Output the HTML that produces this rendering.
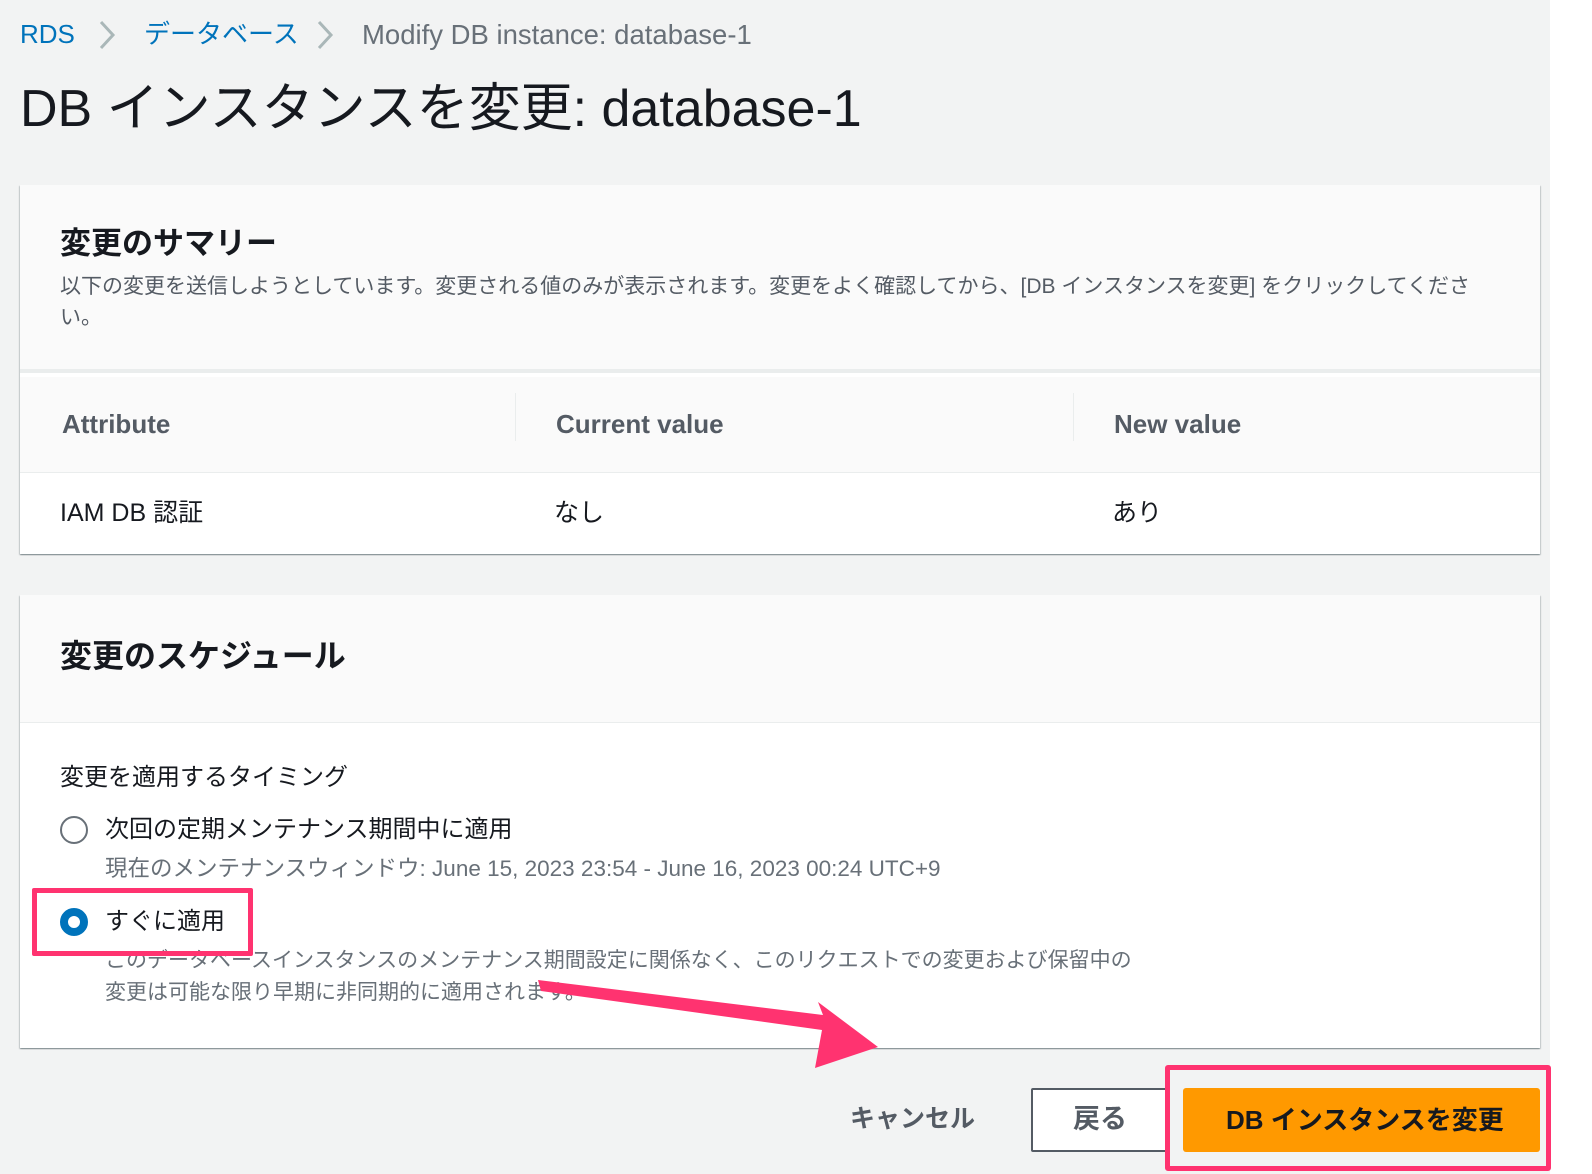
<!DOCTYPE html>
<html><head><meta charset="utf-8"><style>
*{box-sizing:border-box;margin:0;padding:0}
body{width:1592px;height:1174px;background:#fff;position:relative;overflow:hidden;font-family:"Liberation Sans","Noto Sans CJK JP",sans-serif;color:#16191f}
.bg{position:absolute;left:0;top:0;width:1550px;height:1174px;background:#f2f3f3}
.a{position:absolute;white-space:nowrap;line-height:1}
.panel{position:absolute;left:20px;width:1520px;background:#fff;box-shadow:0 1px 1px 0 rgba(0,28,36,.3),1px 1px 1px 0 rgba(0,28,36,.15),-1px 1px 1px 0 rgba(0,28,36,.15)}
.radio{position:absolute;width:28px;height:28px;border-radius:50%;border:2px solid #687078;background:#fff}
</style></head><body>
<div class="bg"></div>
<div class="a" style="left:20px;top:21px;font-size:26px;color:#0073bb">RDS</div>
<svg class="a" style="left:98px;top:20px" width="20" height="30"><path d="M3 2 L15 15 L3 28" fill="none" stroke="#aab7b8" stroke-width="3"/></svg>
<div class="a" style="left:144px;top:21px;font-size:26px;color:#0073bb">データベース</div>
<svg class="a" style="left:316px;top:20px" width="20" height="30"><path d="M3 2 L15 15 L3 28" fill="none" stroke="#aab7b8" stroke-width="3"/></svg>
<div class="a" style="left:362px;top:21px;font-size:27.5px;color:#687078">Modify DB instance: database-1</div>
<div class="a" style="left:20px;top:83px;font-size:52px;color:#16191f">DB インスタンスを変更: database-1</div>

<div class="panel" style="top:185px;height:369px">
  <div style="position:absolute;left:0;top:0;width:100%;height:188px;background:#fafafa;border-bottom:4px solid #eaeded"></div>
  <div class="a" style="left:40px;top:43px;font-size:31px;font-weight:bold">変更のサマリー</div>
  <div class="a" style="left:40px;top:91px;font-size:21px;color:#545b64">以下の変更を送信しようとしています。変更される値のみが表示されます。変更をよく確認してから、[DB インスタンスを変更] をクリックしてくださ</div>
  <div class="a" style="left:40px;top:122px;font-size:21px;color:#545b64">い。</div>
  <div style="position:absolute;left:0;top:192px;width:100%;height:96px;background:#fafafa;border-bottom:1px solid #eaeded"></div>
  <div style="position:absolute;left:495px;top:208px;width:1px;height:48px;background:#eaeded"></div>
  <div style="position:absolute;left:1053px;top:208px;width:1px;height:48px;background:#eaeded"></div>
  <div class="a" style="left:42px;top:226px;font-size:26px;font-weight:bold;color:#545b64">Attribute</div>
  <div class="a" style="left:536px;top:226px;font-size:26px;font-weight:bold;color:#545b64">Current value</div>
  <div class="a" style="left:1094px;top:226px;font-size:26px;font-weight:bold;color:#545b64">New value</div>
  <div class="a" style="left:40px;top:316px;font-size:25px">IAM DB 認証</div>
  <div class="a" style="left:534px;top:316px;font-size:25px">なし</div>
  <div class="a" style="left:1092px;top:316px;font-size:25px">あり</div>
</div>

<div class="panel" style="top:595px;height:453px">
  <div style="position:absolute;left:0;top:0;width:100%;height:128px;background:#fafafa;border-bottom:1px solid #eaeded"></div>
  <div class="a" style="left:40px;top:45px;font-size:32px;font-weight:bold">変更のスケジュール</div>
  <div class="a" style="left:40px;top:171px;font-size:24px">変更を適用するタイミング</div>
  <div class="radio" style="left:40px;top:221px"></div>
  <div class="a" style="left:85px;top:223px;font-size:24px">次回の定期メンテナンス期間中に適用</div>
  <div class="a" style="left:85px;top:263px;font-size:22.5px;color:#687078">現在のメンテナンスウィンドウ: June 15, 2023 23:54 - June 16, 2023 00:24 UTC+9</div>
  <div class="radio" style="left:40px;top:313px;border:8px solid #0073bb"></div>
  <div class="a" style="left:85px;top:315px;font-size:24px">すぐに適用</div>
  <div class="a" style="left:85px;top:355px;font-size:21px;color:#687078">このデータベースインスタンスのメンテナンス期間設定に関係なく、このリクエストでの変更および保留中の</div>
  <div class="a" style="left:85px;top:387px;font-size:21px;color:#687078">変更は可能な限り早期に非同期的に適用されます。</div>
</div>

<div style="position:absolute;left:32px;top:888px;width:221px;height:68px;border:5px solid #ff3370;border-radius:2px"></div>

<svg style="position:absolute;left:0;top:0" width="1592" height="1174">
<polygon points="538,980 823,1015 818,1002 878,1047 815,1068 822,1030 541,991" fill="#ff3370"/>
</svg>

<div class="a" style="left:850px;top:1107px;font-size:25px;font-weight:bold;color:#545b64">キャンセル</div>
<div style="position:absolute;left:1031px;top:1088px;width:137px;height:64px;border:2px solid #545b64;border-radius:2px;background:#fff"></div>
<div class="a" style="left:1073px;top:1106px;font-size:27px;font-weight:bold;color:#545b64">戻る</div>
<div style="position:absolute;left:1165px;top:1065px;width:386px;height:106px;border:5px solid #ff3370;border-radius:3px"></div>
<div style="position:absolute;left:1183px;top:1088px;width:357px;height:64px;background:#ff9900;border-radius:3px"></div>
<div class="a" style="left:1226px;top:1107px;font-size:26px;font-weight:bold;color:#16191f">DB インスタンスを変更</div>
</body></html>
